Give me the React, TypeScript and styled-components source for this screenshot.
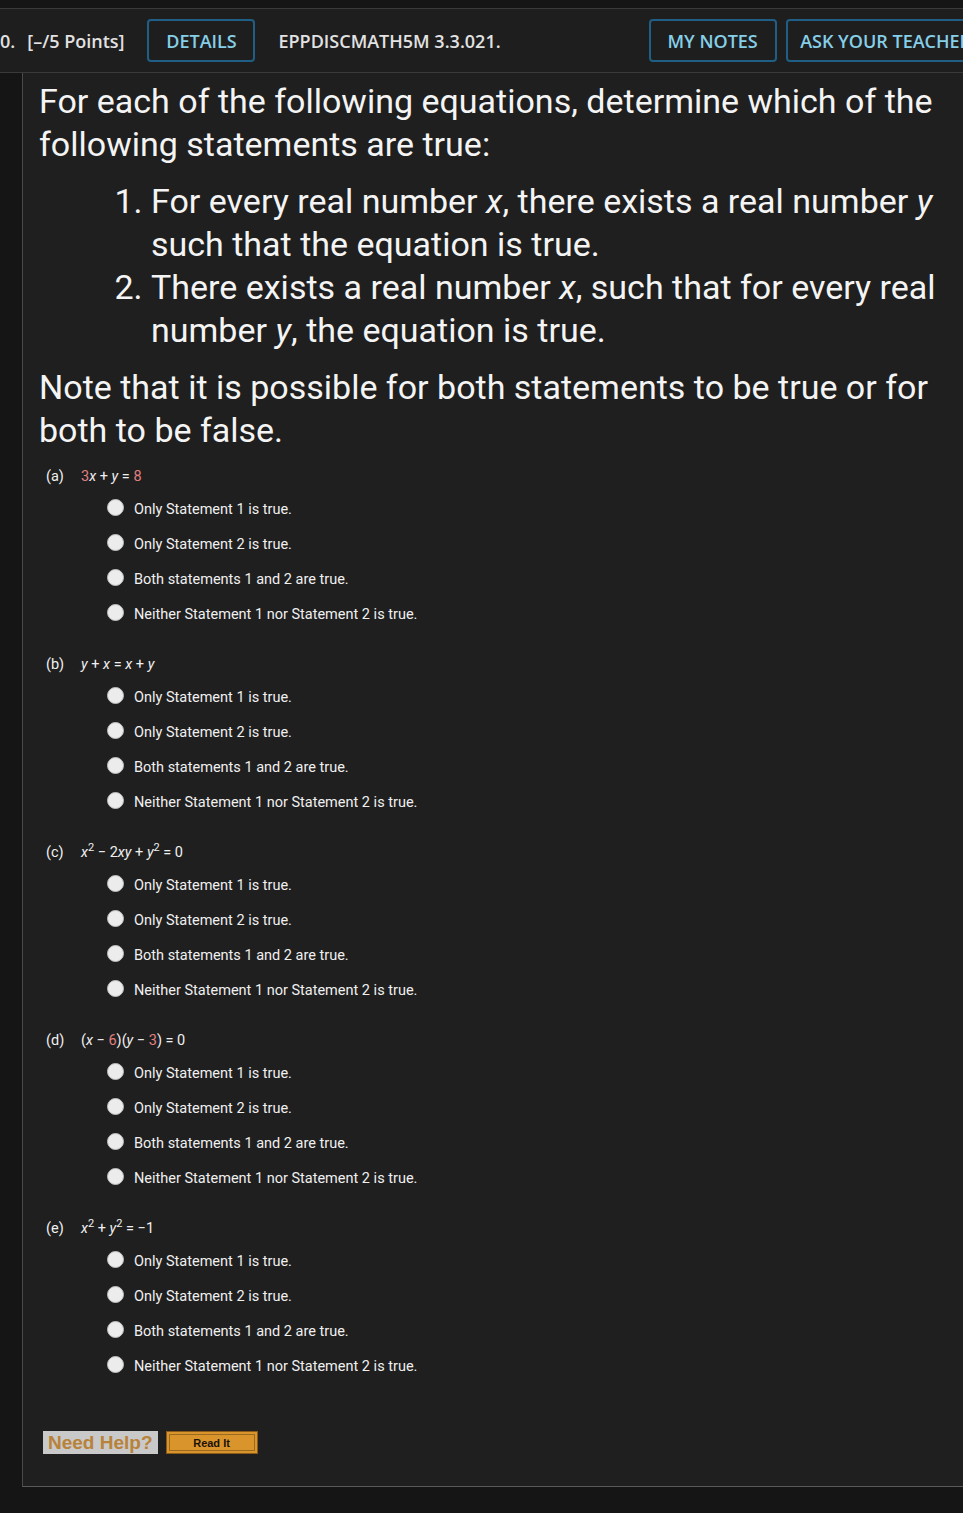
import React from "react";
import styled, { createGlobalStyle } from "styled-components";

const Global = createGlobalStyle`
  html, body { margin: 0; padding: 0; background: #151515; }
  body { font-family: Roboto, "Liberation Sans", sans-serif; color: #f0f0f0; overflow-x: hidden; }
  * { box-sizing: border-box; }
`;

const Page = styled.div`
  width: 963px;
  min-height: 1513px;
  padding-top: 8px;
  background: #151515;
  overflow: hidden;
`;

const Header = styled.div`
  display: flex;
  align-items: center;
  height: 65px;
  border-top: 1px solid #3a3a3a;
  border-bottom: 1px solid #3a3a3a;
  background: #1e1e1e;
  font-family: "Open Sans", "Liberation Sans", sans-serif;
  font-weight: 600;
  font-size: 18px;
  color: #e2e2e2;
  white-space: nowrap;
  overflow: hidden;
`;

const HeaderText = styled.span<{ $ml?: number }>`
  margin-left: ${(p) => p.$ml ?? 0}px;
  flex: none;
`;

const HeaderButton = styled.div<{ $ml: number; $w: number }>`
  margin-left: ${(p) => p.$ml}px;
  width: ${(p) => p.$w}px;
  flex: none;
  height: 43px;
  border: 2px solid #1f5f85;
  border-radius: 4px;
  display: flex;
  align-items: center;
  justify-content: center;
  color: #86cfe8;
  font-weight: 600;
`;

const Body = styled.div`
  display: flex;
`;

const LeftStrip = styled.div`
  width: 22px;
  flex: none;
  background: #151515;
`;

const Panel = styled.div`
  flex: 1;
  background: #1f1f1f;
  border-left: 1px solid #4a4a4a;
  border-bottom: 1px solid #5a5a5a;
  padding: 7px 0 0 16px;
  height: 1414px;
`;

const Lead = styled.p`
  margin: 0;
  font-size: 34px;
  line-height: 43px;
  color: #f4f4f4;
  padding-right: 6px;
`;

const Numbered = styled.ol`
  margin: 14px 0 14px 0;
  padding-left: 112px;
  padding-right: 6px;
  font-size: 34px;
  line-height: 43px;
  color: #f4f4f4;
`;

const Parts = styled.div`
  margin-top: 13px;
  display: flex;
  flex-direction: column;
  gap: 21px;
`;

const Part = styled.div`
  display: flex;
  flex-direction: column;
`;

const PartHead = styled.div`
  display: flex;
  align-items: center;
  height: 22px;
  font-size: 14.5px;
  color: #f0f0f0;
  padding-left: 7px;
`;

const PartLabel = styled.span`
  width: 35px;
  flex: none;
`;

const Eq = styled.span`
  font-size: 14.5px;
  i { font-style: italic; }
  sup { font-size: 11px; line-height: 0; vertical-align: 6px; }
`;

const Red = styled.span`
  color: #e28080;
`;

const Options = styled.div`
  display: flex;
  flex-direction: column;
  margin-top: 5px;
  padding-left: 68px;
`;

const Option = styled.label`
  display: flex;
  align-items: center;
  height: 35px;
  font-size: 14.5px;
  color: #f0f0f0;
`;

const Radio = styled.span`
  width: 17px;
  height: 17px;
  border-radius: 50%;
  background: #ececec;
  border: 1px solid #bdbdbd;
  margin-right: 10px;
  flex: none;
  position: relative;
  top: -2px;
`;

const HelpRow = styled.div`
  display: flex;
  align-items: center;
  gap: 8px;
  margin-top: 47px;
  padding-left: 4px;
`;

const NeedHelp = styled.div`
  background: #c9c9c9;
  color: #b8823a;
  font-family: "Liberation Sans", Arial, sans-serif;
  font-weight: bold;
  font-size: 19px;
  height: 23px;
  line-height: 23px;
  padding: 0 5px;
`;

const ReadIt = styled.div`
  background: #d9952c;
  border: 1px solid #8a5a18;
  padding: 2px;
  height: 23px;
  width: 92px;
  display: flex;
`;

const ReadItInner = styled.div`
  flex: 1;
  border: 1px solid #9a6a20;
  display: flex;
  align-items: center;
  justify-content: center;
  color: #1a1208;
  font-family: "Liberation Sans", Arial, sans-serif;
  font-weight: bold;
  font-size: 11px;
`;

const OPTIONS = [
  "Only Statement 1 is true.",
  "Only Statement 2 is true.",
  "Both statements 1 and 2 are true.",
  "Neither Statement 1 nor Statement 2 is true.",
];

const parts: { label: string; eq: React.ReactNode }[] = [
  {
    label: "(a)",
    eq: (
      <>
        <Red>3</Red><i>x</i> + <i>y</i> = <Red>8</Red>
      </>
    ),
  },
  {
    label: "(b)",
    eq: (
      <>
        <i>y</i> + <i>x</i> = <i>x</i> + <i>y</i>
      </>
    ),
  },
  {
    label: "(c)",
    eq: (
      <>
        <i>x</i><sup>2</sup> − 2<i>xy</i> + <i>y</i><sup>2</sup> = 0
      </>
    ),
  },
  {
    label: "(d)",
    eq: (
      <>
        (<i>x</i> − <Red>6</Red>)(<i>y</i> − <Red>3</Red>) = 0
      </>
    ),
  },
  {
    label: "(e)",
    eq: (
      <>
        <i>x</i><sup>2</sup> + <i>y</i><sup>2</sup> = −1
      </>
    ),
  },
];

export default function App() {
  return (
    <Page>
      <Global />
      <Header>
        <HeaderText>0.</HeaderText>
        <HeaderText $ml={12}>[–/5 Points]</HeaderText>
        <HeaderButton $ml={23} $w={108}>DETAILS</HeaderButton>
        <HeaderText $ml={23}>EPPDISCMATH5M 3.3.021.</HeaderText>
        <HeaderButton $ml={148} $w={128}>MY NOTES</HeaderButton>
        <HeaderButton $ml={9} $w={200}>ASK YOUR TEACHER</HeaderButton>
      </Header>
      <Body>
        <LeftStrip />
        <Panel>
          <Lead>
            For each of the following equations, determine which of the following statements are true:
          </Lead>
          <Numbered>
            <li>
              For every real number <i>x</i>, there exists a real number <i>y</i> such that the equation is true.
            </li>
            <li>
              There exists a real number <i>x</i>, such that for every real number <i>y</i>, the equation is true.
            </li>
          </Numbered>
          <Lead>
            Note that it is possible for both statements to be true or for both to be false.
          </Lead>
          <Parts>
            {parts.map((p) => (
              <Part key={p.label}>
                <PartHead>
                  <PartLabel>{p.label}</PartLabel>
                  <Eq>{p.eq}</Eq>
                </PartHead>
                <Options>
                  {OPTIONS.map((o) => (
                    <Option key={o}>
                      <Radio />
                      {o}
                    </Option>
                  ))}
                </Options>
              </Part>
            ))}
          </Parts>
          <HelpRow>
            <NeedHelp>Need Help?</NeedHelp>
            <ReadIt>
              <ReadItInner>Read It</ReadItInner>
            </ReadIt>
          </HelpRow>
        </Panel>
      </Body>
    </Page>
  );
}
